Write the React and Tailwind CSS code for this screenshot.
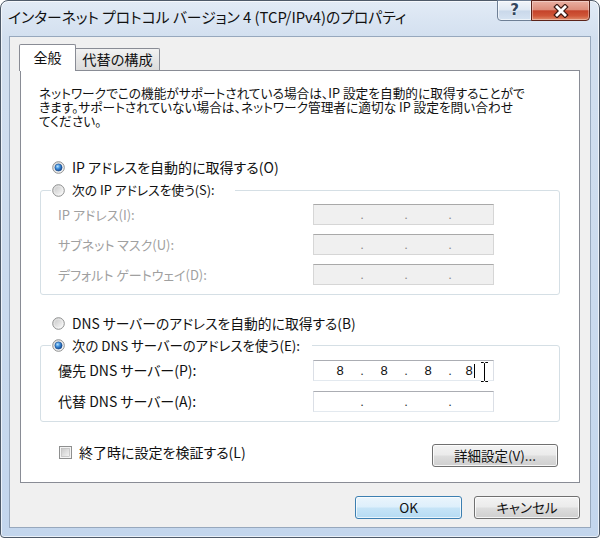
import React from "react";

const F = "font-['Noto_Sans_CJK_JP','Noto_Sans_CJK_SC',sans-serif] [font-feature-settings:'palt']";

function Defs() {
  return (
    <svg width="0" height="0" className="absolute">
      <defs>
        <linearGradient id="rgbg" x1="0" y1="0" x2="1" y2="1">
          <stop offset="0" stopColor="#d6d6d6" />
          <stop offset="1" stopColor="#ffffff" />
        </linearGradient>
        <linearGradient id="rgin" x1="0" y1="0" x2="1" y2="1">
          <stop offset="0" stopColor="#cbcbcb" />
          <stop offset="1" stopColor="#f6f6f6" />
        </linearGradient>
        <radialGradient id="rgdot" cx="0.38" cy="0.35" r="0.7">
          <stop offset="0" stopColor="#b5e3ff" />
          <stop offset="0.45" stopColor="#3f8fdc" />
          <stop offset="1" stopColor="#0e3f86" />
        </radialGradient>
        <linearGradient id="cbin" x1="0" y1="0" x2="1" y2="1">
          <stop offset="0" stopColor="#c9c9c9" />
          <stop offset="1" stopColor="#f4f4f4" />
        </linearGradient>
      </defs>
    </svg>
  );
}

function Radio({ checked }) {
  return (
    <svg width="13" height="13" viewBox="0 0 13 13" className="shrink-0">
      <circle cx="6.5" cy="6.5" r="5.8" fill="url(#rgbg)" stroke="#8e8f8f" strokeWidth="1" />
      {checked ? (
        <circle cx="6.5" cy="6.5" r="3.6" fill="url(#rgdot)" stroke="#184b8e" strokeWidth="0.6" />
      ) : (
        <circle cx="6.5" cy="6.5" r="3.8" fill="url(#rgin)" />
      )}
    </svg>
  );
}

function Checkbox() {
  return (
    <svg width="13" height="13" viewBox="0 0 13 13" className="shrink-0">
      <rect x="0.5" y="0.5" width="12" height="12" fill="#f4f4f4" stroke="#8e8f8f" />
      <rect x="2.5" y="2.5" width="8" height="8" fill="url(#cbin)" stroke="#b5b5b5" strokeWidth="0.6" />
    </svg>
  );
}

function IpBox({ values, disabled, caret }) {
  const vals = values || ["", "", "", ""];
  const dot = disabled ? "text-[#8a8a8a]" : "text-[#333]";
  return (
    <div
      className={
        disabled
          ? "relative w-[181px] h-[21px] border border-[#d6d6d6] border-t-[#a9a9a9] bg-[#f0f0f0] flex items-center pl-[5px] text-[13px] leading-[16px] font-['Liberation_Sans',sans-serif]"
          : "relative w-[181px] h-[21px] border border-[#dbdfe6] border-t-[#abadb3] border-b-[#e3e9ef] bg-white flex items-center pl-[5px] text-[13px] leading-[16px] font-['Liberation_Sans',sans-serif]"
      }
    >
      <span className="w-[42px] text-center">{vals[0]}</span>
      <span className={`w-[2px] flex justify-center ${dot}`}>.</span>
      <span className="w-[42px] text-center">{vals[1]}</span>
      <span className={`w-[2px] flex justify-center ${dot}`}>.</span>
      <span className="w-[42px] text-center">{vals[2]}</span>
      <span className={`w-[2px] flex justify-center ${dot}`}>.</span>
      <span className="w-[38px] flex justify-center items-center">
        {vals[3]}
        {caret && <span className="ml-px w-px h-[14px] bg-black" />}
      </span>
      {caret && (
        <svg width="9" height="22" viewBox="0 0 9 22" className="absolute left-[166px] top-[0px]">
          <path d="M1 1.5 H3.5 L4.5 2.5 L5.5 1.5 H8 M4.5 2.5 V19.5 M1 20.5 H3.5 L4.5 19.5 L5.5 20.5 H8" stroke="#fff" strokeWidth="3" fill="none" />
          <path d="M1 1.5 H3.5 L4.5 2.5 L5.5 1.5 H8 M4.5 2.5 V19.5 M1 20.5 H3.5 L4.5 19.5 L5.5 20.5 H8" stroke="#000" strokeWidth="1" fill="none" />
        </svg>
      )}
    </div>
  );
}

function Field({ label, disabled, values, caret, labelClass }) {
  return (
    <div className="flex items-center h-[21px]">
      <div className={labelClass}>{label}</div>
      <IpBox disabled={disabled} values={values} caret={caret} />
    </div>
  );
}

function Button({ children, w, primary }) {
  return (
    <div
      className={
        primary
          ? `${w} h-[23px] rounded-[3px] border border-[#3c7fb1] flex items-center justify-center text-[13.5px] text-[#111] bg-[linear-gradient(180deg,#eaf5fc_0%,#ddeffb_48%,#c6e4f7_52%,#b5dbf3_100%)] shadow-[inset_0_0_0_1px_rgba(255,255,255,0.7)]`
          : `${w} h-[23px] rounded-[3px] border border-[#707070] flex items-center justify-center text-[13.5px] text-[#111] bg-[linear-gradient(180deg,#f3f3f3_0%,#ebebeb_48%,#dddddd_52%,#cfcfcf_100%)] shadow-[inset_0_0_0_1px_rgba(255,255,255,0.8)]`
      }
    >
      {children}
    </div>
  );
}

const DIS = "w-[255px] text-[13px] text-[#a0a0a0] whitespace-nowrap";
const EN = "w-[255px] text-[14px] text-[#111] whitespace-nowrap";

export default function App() {
  return (
    <div className={`w-[600px] h-[538px] ${F} text-[#111] select-none`}>
      <Defs />
      <div className="w-[600px] h-[538px] flex flex-col border border-[#4e5a69] rounded-t-[8px] rounded-b-[4px] bg-[linear-gradient(180deg,#e2ebf6_0%,#d2dfef_7%,#c3d6ed_100%)] shadow-[inset_0_0_0_1px_rgba(255,255,255,0.65)]">
        {/* title bar */}
        <div className="h-[35px] flex items-start justify-between pl-[7px] pr-[9px]">
          <div className="mt-[6px] text-[14.8px] leading-[20px] whitespace-nowrap">
            インターネット プロトコル バージョン 4 (TCP/IPv4)のプロパティ
          </div>
          <div className="flex -mt-px">
            <div className="w-[35px] h-[21px] rounded-bl-[4px] border border-[#6e7f95] bg-[linear-gradient(180deg,#f1f5fa_0%,#dfe8f3_48%,#c9d8ea_52%,#d6e3f2_100%)] shadow-[inset_0_0_0_1px_rgba(255,255,255,0.6)] flex items-center justify-center">
              <span className="text-[15px] leading-[15px] font-bold text-[#34475e] font-['DejaVu_Sans',sans-serif] [text-shadow:0_0_2px_#fff]">?</span>
            </div>
            <div className="w-[59px] h-[21px] -ml-px rounded-br-[4px] border border-[#5b231a] bg-[linear-gradient(180deg,#eab0a2_0%,#dd8e7c_45%,#c5432a_52%,#cf5638_78%,#e08d6c_100%)] shadow-[inset_0_0_0_1px_rgba(255,255,255,0.35)] flex items-center justify-center">
              <svg width="18" height="14" viewBox="0 0 18 14">
                <path d="M5 3 L13 11 M13 3 L5 11" stroke="#3b1811" strokeWidth="5.2" strokeLinecap="square" />
                <path d="M5 3 L13 11 M13 3 L5 11" stroke="#ffffff" strokeWidth="2.8" strokeLinecap="square" />
              </svg>
            </div>
          </div>
        </div>

        {/* client */}
        <div className="mx-[8px] h-[492px] border border-[#97a8bd] bg-[#f0f0f0] flex flex-col">
          {/* tabs */}
          <div className="relative z-10 flex items-end h-[33px] pl-[9px]">
            <div className="w-[57px] h-[27px] -mb-px border border-b-0 border-[#898c95] rounded-t-[2px] bg-white flex items-center justify-center text-[14px] pb-[2px]">
              全般
            </div>
            <div className="w-[84px] h-[22px] border border-l-0 border-b-0 border-[#898c95] rounded-tr-[2px] bg-[linear-gradient(180deg,#f2f2f2_0%,#e6e6e6_50%,#dcdcdc_100%)] flex items-center justify-center text-[14.2px]">
              代替の構成
            </div>
          </div>

          {/* panel */}
          <div className="ml-[10px] w-[560px] h-[413px] border border-[#898c95] bg-white flex flex-col text-[13px]">
            <div className="pt-[15px] pl-[18px] text-[12.7px] leading-[14px] whitespace-nowrap">
              <div>ネットワークでこの機能がサポートされている場合は、IP 設定を自動的に取得することがで</div>
              <div>きます。サポートされていない場合は、ネットワーク管理者に適切な IP 設定を問い合わせ</div>
              <div>てください。</div>
            </div>

            <div className="mt-[29px] ml-[31px] h-[20px] flex items-center gap-[7px] whitespace-nowrap text-[14px]">
              <Radio checked />
              <span>IP アドレスを自動的に取得する(O)</span>
            </div>

            <div className="mt-[3px] ml-[19px] w-[520px]">
              <div className="relative z-10 h-[20px] w-fit ml-[11px] flex items-center gap-[7px] bg-white pl-px pr-[20px] whitespace-nowrap text-[12.8px]">
                <Radio />
                <span>次の IP アドレスを使う(S):</span>
              </div>
              <div className="-mt-[10px] h-[105px] border border-[#d5dfe5] rounded-[3px] pt-[13px] pl-[17px] flex flex-col gap-[9px]">
                <Field label="IP アドレス(I):" disabled labelClass={DIS} />
                <Field label="サブネット マスク(U):" disabled labelClass={DIS} />
                <Field label="デフォルト ゲートウェイ(D):" disabled labelClass={DIS} />
              </div>
            </div>

            <div className="mt-[18px] ml-[31px] h-[20px] flex items-center gap-[7px] whitespace-nowrap text-[13.8px]">
              <Radio />
              <span>DNS サーバーのアドレスを自動的に取得する(B)</span>
            </div>

            <div className="mt-[2px] ml-[19px] w-[520px]">
              <div className="relative z-10 h-[20px] w-fit ml-[11px] flex items-center gap-[7px] bg-white pl-px pr-[12px] whitespace-nowrap text-[13.4px]">
                <Radio checked />
                <span>次の DNS サーバーのアドレスを使う(E):</span>
              </div>
              <div className="-mt-[10px] h-[77px] border border-[#d5dfe5] rounded-[3px] pt-[14px] pl-[17px] flex flex-col gap-[10px]">
                <Field label="優先 DNS サーバー(P):" values={["8", "8", "8", "8"]} caret labelClass={EN} />
                <Field label="代替 DNS サーバー(A):" labelClass={EN} />
              </div>
            </div>

            <div className="mt-[22px] h-[23px] flex items-start justify-between pl-[38px] pr-[21px]">
              <div className="h-[16px] flex items-center gap-[7px] whitespace-nowrap text-[14px]">
                <Checkbox />
                <span>終了時に設定を検証する(L)</span>
              </div>
              <Button w="w-[126px]">詳細設定(V)...</Button>
            </div>
          </div>

          {/* bottom buttons */}
          <div className="mt-[13px] flex justify-end gap-[12px] pr-[10px]">
            <Button w="w-[107px]" primary>OK</Button>
            <Button w="w-[106px]">キャンセル</Button>
          </div>
        </div>
      </div>
    </div>
  );
}
